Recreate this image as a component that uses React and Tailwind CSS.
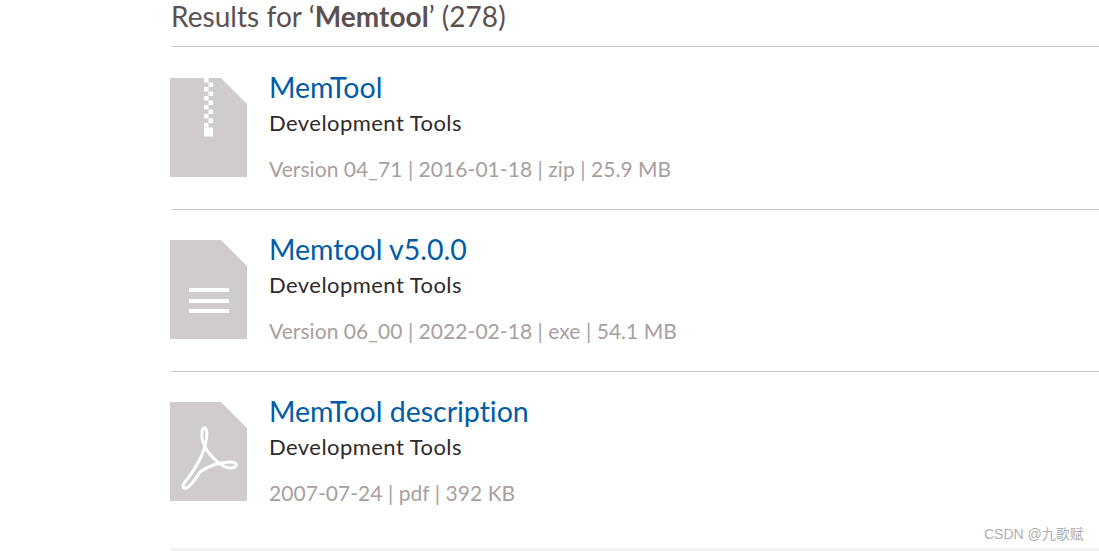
const FONT = { fontFamily: '"Lato", "Noto Sans", sans-serif' };

function Shell({ children }) {
  return (
    <svg width="77" height="99" viewBox="0 0 77 99" className="block shrink-0 -ml-px">
      <path d="M0 0H51L77 26V99H0Z" fill="#d1cccc" />
      {children}
    </svg>
  );
}

const ZipIcon = () => (
  <Shell>
    <g fill="#ffffff">
      <rect x="34" y="0" width="4.5" height="4.5" />
      <rect x="38.5" y="4.5" width="4.5" height="4.5" />
      <rect x="34" y="9" width="4.5" height="4.5" />
      <rect x="38.5" y="13.5" width="4.5" height="4.5" />
      <rect x="34" y="18" width="4.5" height="4.5" />
      <rect x="38.5" y="22.5" width="4.5" height="4.5" />
      <rect x="34" y="27" width="4.5" height="4.5" />
      <rect x="38.5" y="31.5" width="4.5" height="4.5" />
      <rect x="34" y="36" width="4.5" height="4.5" />
      <rect x="38.5" y="40.5" width="4.5" height="4.5" />
      <rect x="34" y="45" width="4.5" height="4.5" />
      <rect x="34" y="49.5" width="9" height="9" />
    </g>
  </Shell>
);

const DocIcon = () => (
  <Shell>
    <g fill="#ffffff">
      <rect x="19" y="48" width="40" height="4" />
      <rect x="19" y="59" width="40" height="4" />
      <rect x="19" y="69" width="40" height="4" />
    </g>
  </Shell>
);

const PdfIcon = () => (
  <Shell>
    <path
      d="M35 26C38 28 37 36 35 44C32 56 22 72 15 80C11 85 14 88 18 85C24 80 27 74 30 70C38 64 50 60 60 60C68 60 68 65 62 66C54 67 44 58 38 50C34 44 31 36 32 30C32 27 34 26 35 26Z"
      fill="none"
      stroke="#ffffff"
      strokeWidth="3"
      strokeLinejoin="round"
    />
  </Shell>
);

const rows = [
  { icon: <ZipIcon />, title: "MemTool", meta: "Version 04_71 | 2016-01-18 | zip | 25.9 MB" },
  { icon: <DocIcon />, title: "Memtool v5.0.0", meta: "Version 06_00 | 2022-02-18 | exe | 54.1 MB" },
  { icon: <PdfIcon />, title: "MemTool description", meta: "2007-07-24 | pdf | 392 KB", last: true },
];

function Row({ icon, title, meta, last }) {
  return (
    <div className={last ? "flex h-[162px] pt-[30px]" : "flex h-[162px] border-b border-[#d1cccc] pt-[30px]"}>
      {icon}
      <div className="ml-[22px] -mt-[9px]">
        <div className="h-[36px] text-[28.5px] leading-[36px] text-[#005ca9] [font-variant-ligatures:none]">{title}</div>
        <div className="mt-[1px] h-[33px] text-[22px] leading-[33px] text-[#2e2a2a] tracking-[0.45px]">Development Tools</div>
        <div className="mt-[13px] h-[33px] text-[21px] leading-[33px] text-[#a8a0a0] tracking-[0.05px]">{meta}</div>
      </div>
    </div>
  );
}

export default function App() {
  return (
    <div className="relative h-[551px] w-[1099px] overflow-hidden bg-white pl-[171px]" style={FONT}>
      <div className="mb-px h-[47px] border-b border-[#d1cccc] text-[28px] leading-[33px] text-[#5c5050] tracking-[0.05px]">
        Results for ‘<span className="font-bold">Memtool</span>’ (278)
      </div>
      {rows.map((r) => (
        <Row key={r.title} {...r} />
      ))}
      <div className="absolute bottom-0 left-[171px] h-[3px] w-full bg-[#f2f0f0]" />
      <div className="absolute left-[984px] top-[525px] text-[14px] leading-[18px] text-[#b0b0b0]" style={{ fontFamily: '"Liberation Sans", "Noto Sans CJK SC", sans-serif' }}>
        CSDN @九歌赋
      </div>
    </div>
  );
}
